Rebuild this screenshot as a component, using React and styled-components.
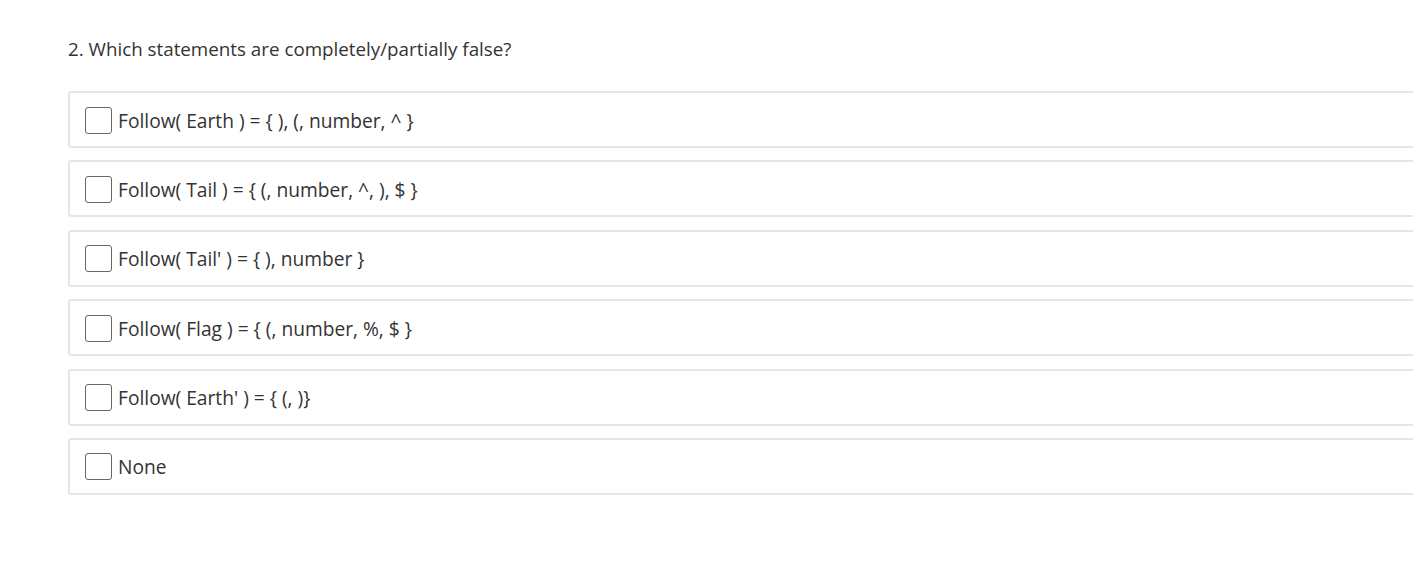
import React from "react";
import styled, { createGlobalStyle } from "styled-components";

const GlobalStyle = createGlobalStyle`
  body {
    margin: 0;
    background: #fff;
    overflow: hidden;
    font-family: "Open Sans", "Noto Sans", sans-serif;
    color: #333;
  }
`;

const Page = styled.div`
  padding: 36px 0 0 68px;
`;

const Question = styled.h2`
  margin: 0 0 29px 0;
  font-size: 18.8px;
  font-weight: 400;
  line-height: 26px;
  color: #333;
`;

const Options = styled.div`
  display: flex;
  flex-direction: column;
  gap: 12.4px;
`;

const Option = styled.label`
  display: flex;
  align-items: center;
  gap: 6px;
  width: 1400px;
  height: 57px;
  box-sizing: border-box;
  padding: 1px 0 0 15px;
  border: 2px solid #e6e6e6;
  border-radius: 3px;
  font-size: 19.2px;
  color: #333;
  cursor: pointer;
`;

const Box = styled.span`
  width: 27px;
  height: 27px;
  box-sizing: border-box;
  border: 1px solid #666;
  border-radius: 3px;
  background: #fff;
  flex-shrink: 0;
`;

const options = [
  "Follow( Earth ) = { ), (, number, ^ }",
  "Follow( Tail ) = { (, number, ^, ), $ }",
  "Follow( Tail' ) = { ), number }",
  "Follow( Flag ) = { (, number, %, $ }",
  "Follow( Earth' ) = { (, )}",
  "None",
];

export default function App() {
  return (
    <>
      <GlobalStyle />
      <Page>
        <Question>2. Which statements are completely/partially false?</Question>
        <Options>
          {options.map((o) => (
            <Option key={o}>
              <Box />
              <span>{o}</span>
            </Option>
          ))}
        </Options>
      </Page>
    </>
  );
}
